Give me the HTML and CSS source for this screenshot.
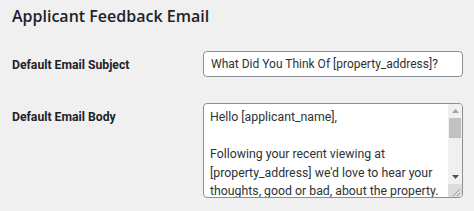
FILE: index.html
```html
<!DOCTYPE html>
<html lang="en">
  <head>
    <meta charset="UTF-8" />
    <meta name="viewport" content="width=device-width, initial-scale=1.0" />
    <title>Applicant Feedback Email</title>
    <link rel="stylesheet" href="styles.css">
  </head>
  <body>
    <div class="wrap">
      <h2 class="section-title">Applicant Feedback Email</h2>

      <div class="form-row row-subject">
        <label class="form-label" for="email-subject">Default Email Subject</label>
        <div class="form-field">
          <input type="text" id="email-subject" class="text-input" value="What Did You Think Of [property_address]?">
        </div>
      </div>

      <div class="form-row row-body">
        <label class="form-label" for="email-body">Default Email Body</label>
        <div class="form-field">
          <div class="textarea-box">
            <textarea id="email-body" class="text-area" rows="5">Hello [applicant_name],

Following your recent viewing at [property_address] we'd love to hear your thoughts, good or bad, about the property.

Kind regards,
The team</textarea>
            <!-- fake windows-style scrollbar -->
            <div class="scrollbar">
              <span class="scroll-btn">
                <svg width="7" height="4" viewBox="0 0 7 4"><path d="M0 4 L3.5 0 L7 4 Z" fill="#a3a3a3"/></svg>
              </span>
              <span class="scroll-thumb"></span>
              <span class="scroll-track"></span>
              <span class="scroll-btn">
                <svg width="7" height="4" viewBox="0 0 7 4"><path d="M0 0 L7 0 L3.5 4 Z" fill="#505050"/></svg>
              </span>
              <span class="scroll-corner">
                <svg width="13" height="13" viewBox="0 0 13 13"><path d="M12 5 L5 12 M12 9 L9 12" stroke="#9a9a9a" stroke-width="1"/></svg>
              </span>
            </div>
          </div>
        </div>
      </div>
    </div>
  </body>
</html>
```

FILE: styles.css
```css
* {
  margin: 0;
  padding: 0;
  box-sizing: border-box;
}

body {
  background-color: #f0f0f1;
  color: #1d2327;
  font-family: Roboto, "Open Sans", sans-serif;
  font-size: 12px;
}

.wrap {
  padding: 0 11px 0 12px;
}

.section-title {
  font-family: "Open Sans", sans-serif;
  font-size: 16px;
  font-weight: 600;
  color: #1d2327;
  padding-top: 4px;
  line-height: 24px;
}

.form-row {
  display: flex;
  align-items: flex-start;
}

.form-label {
  width: 191px;
  font-weight: 700;
  font-size: 12.2px;
  line-height: 20px;
  color: #1d2327;
}

.form-field {
  flex: 1;
}

.row-subject {
  margin-top: 23px;
}

.row-subject .form-label {
  padding-top: 4px;
}

.row-body {
  margin-top: 26px;
}

.row-body .form-label {
  padding-top: 4px;
}

.text-input,
.textarea-box {
  width: 260px;
  border: 1px solid #8c8f94;
  border-radius: 4px;
  background-color: #fff;
}

.text-input,
.text-area {
  color: #2c3338;
  font-family: Roboto, "Open Sans", sans-serif;
  font-size: 12px;
}

.text-area {
  font-size: 12.3px;
}

.text-input {
  display: block;
  height: 26px;
  padding: 0 7px;
  line-height: 24px;
}

.textarea-box {
  position: relative;
  height: 95px;
  overflow: hidden;
}

.text-area {
  display: block;
  width: 100%;
  height: 100%;
  border: none;
  background: transparent;
  padding: 4px 14px 3px 6px;
  line-height: 18.5px;
  resize: none;
  overflow: hidden;
  outline: none;
}

.scrollbar {
  position: absolute;
  top: 0;
  right: 0;
  width: 14px;
  height: 100%;
  background-color: #f0f0f0;
  display: flex;
  flex-direction: column;
}

.scroll-btn {
  height: 14px;
  display: flex;
  align-items: center;
  justify-content: center;
}

.scroll-thumb {
  height: 20px;
  margin: 0 1px;
  background-color: #c1c1c1;
}

.scroll-track {
  flex: 1;
}

.scroll-corner {
  height: 13px;
  background-color: #dcdcdc;
  display: flex;
}
```
